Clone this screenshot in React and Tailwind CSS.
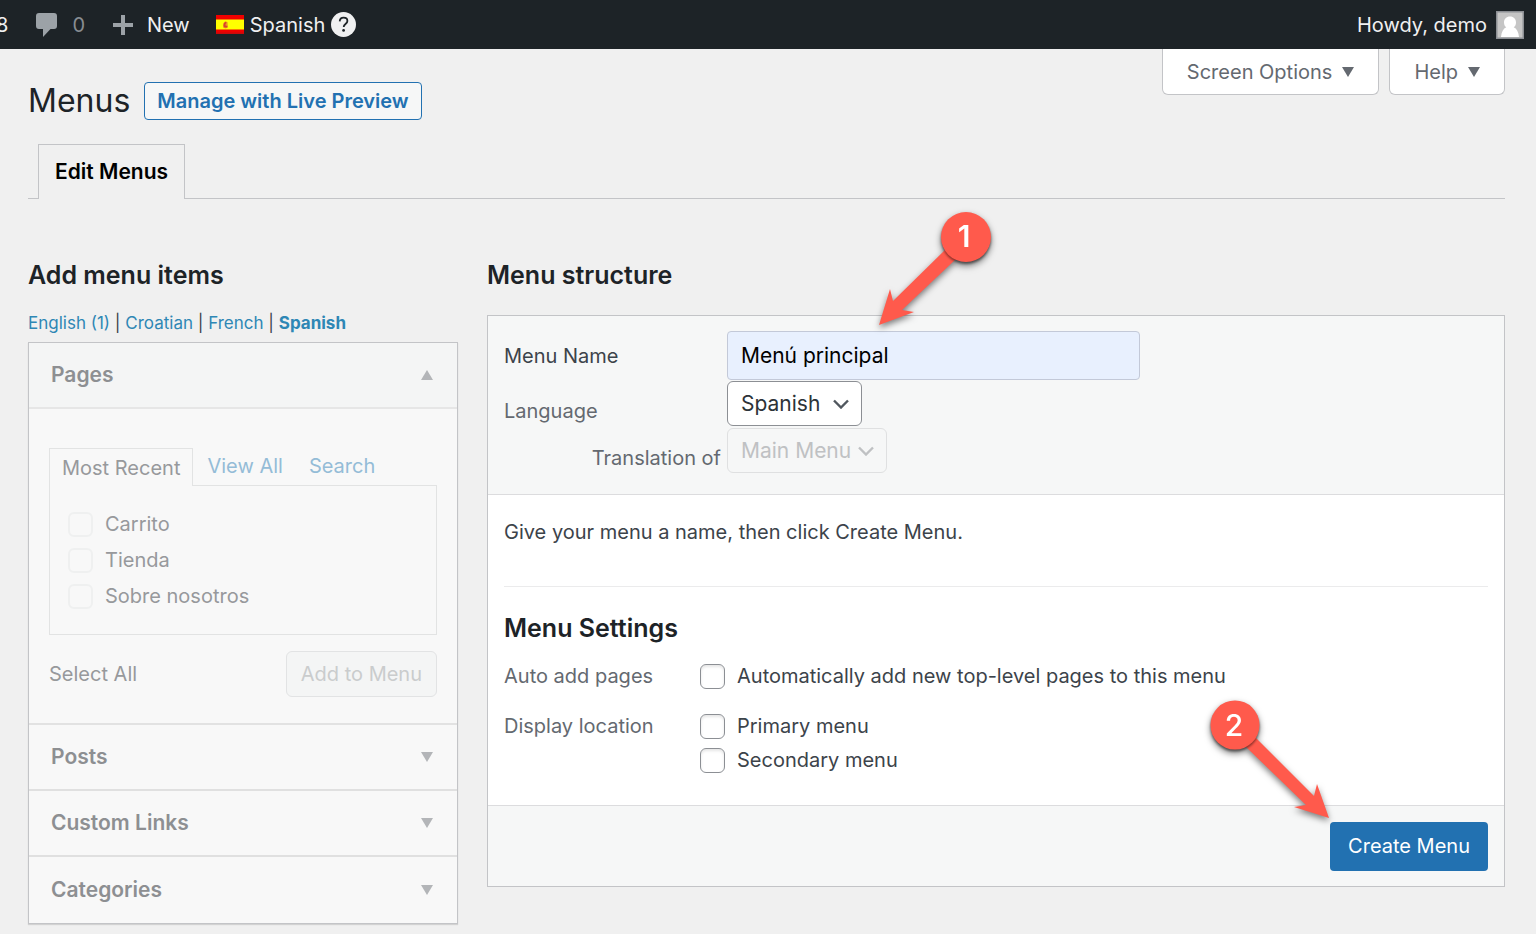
import React from 'react';

const recentPages = ['Carrito', 'Tienda', 'Sobre nosotros'];
const closedSections = ['Posts', 'Custom Links', 'Categories'];

const Triangle = ({ up = false, className = '' }) => (
  <svg viewBox="0 0 12 10" className={className} fill="currentColor" aria-hidden="true">
    <path d={up ? 'M6 0 12 10H0z' : 'M0 0h12L6 10z'} />
  </svg>
);

const SpainFlag = () => (
  <svg viewBox="0 0 28 19" className="w-7 h-[19px]" aria-hidden="true">
    <path fill="#f00000" d="M0 0h28v19H0z" />
    <path fill="#ffff00" d="M0 4.500h28v10H0z" />
    <path fill="#f09a20" d="M7 8.500l2-2 2.500.5.5 5.500-2.500 1-2.500-1z" />
    <path fill="#d8432a" d="M8 8l2-1.500.5 1.500-1 1v1.500l2 .5-.5 1.500H8.500L7.500 11z" />
    <path fill="#b31212" opacity=".6" d="M0 17.500h28V19H0z" />
  </svg>
);

const AdminBar = () => (
  <header className="h-[49px] bg-[#1d2327] text-[#f0f0f1] flex items-center justify-between pr-3 overflow-hidden">
    <nav className="flex items-center">
      <a href="#updates" className="-ml-1">8</a>
      <a href="#comments" className="ml-7 flex items-center gap-[14px] text-[#9ca2a7]">
        <svg viewBox="0 0 22 25" className="w-[22px] h-[25px]" fill="currentColor" aria-hidden="true">
          <path d="M3 1h15q3 0 3 3v10q0 3-3 3h-3.500L7 25V17H3q-3 0-3-3V4q0-3 3-3z" />
        </svg>
        <span className="text-[#888d92]">0</span>
      </a>
      <a href="#new" className="ml-7 flex items-center gap-[14px]">
        <svg viewBox="0 0 20 20" className="w-5 h-5 text-[#9ca2a7]" fill="currentColor" aria-hidden="true">
          <path d="M8 0h4v8h8v4h-8v8H8v-8H0V8h8z" />
        </svg>
        New
      </a>
      <a href="#language" className="ml-[26px] flex items-center gap-[6px]">
        <SpainFlag />
        Spanish
        <svg viewBox="0 0 25 25" className="w-[25px] h-[25px]" aria-hidden="true">
          <circle cx="12.500" cy="12.500" r="12.500" fill="#f0f0f1" />
          <path d="M8.700 9.300c.2-2.300 1.800-3.600 3.900-3.600 2.200 0 3.800 1.300 3.800 3.300 0 3-3.700 3-3.700 5.900" fill="none" stroke="#1d2327" strokeWidth="1.800" />
          <circle cx="12.600" cy="18.400" r="1.400" fill="#1d2327" />
        </svg>
      </a>
    </nav>
    <a href="#profile" className="flex items-center gap-[9px]">
      Howdy, demo
      <svg viewBox="0 0 28 28" className="w-7 h-7" aria-hidden="true">
        <path fill="#8c8f94" d="M0 0h28v28H0z" />
        <path fill="#c5c5c5" d="M1.500 1.500h25v25h-25z" />
        <path fill="#fff" d="M14 5.500c3.600 0 6 2.500 6 6 0 2.300-.9 3.800-2.300 4.800 3 1.300 4.800 4.700 5.300 9.700H5c.5-5 2.300-8.400 5.300-9.700C8.900 15.300 8 13.800 8 11.500c0-3.500 2.400-6 6-6z" />
      </svg>
    </a>
  </header>
);

const ScreenTab = ({ children }) => (
  <button className="h-[46px] px-6 flex items-center gap-[10px] bg-white border border-t-0 border-[#c3c4c7] rounded-b-md text-[#646970]">
    {children}
    <Triangle className="w-3 h-[10px]" />
  </button>
);

const Check = ({ id, label, muted = false }) => (
  <div className="flex items-center gap-3">
    <input
      id={id}
      type="checkbox"
      disabled={muted}
      className={`appearance-none size-[25px] rounded-md ${muted ? 'border-2 border-[#eff0f0] bg-[#f8f8f8]' : 'border border-[#8c8f94] bg-white shadow-[inset_0_2px_3px_rgba(0,0,0,0.1)]'}`}
    />
    <label htmlFor={id}>{label}</label>
  </div>
);

const Dropdown = ({ id, value, className, ...rest }) => (
  <div className={`relative h-[45px] ${className}`}>
    <select
      id={id}
      defaultValue={value}
      className="appearance-none size-full pl-[13px] rounded-md border border-[#8c8f94] bg-white text-[#2c3338] disabled:border-[#dfe0e1] disabled:bg-[#f6f7f7] disabled:text-[#bfc1c3] disabled:opacity-100"
      {...rest}
    >
      <option>{value}</option>
    </select>
    <svg viewBox="0 0 16 10" className={`absolute right-[13px] top-[18px] w-4 h-[10px] pointer-events-none ${rest.disabled ? 'text-[#bfc1c3]' : 'text-[#50575e]'}`} aria-hidden="true">
      <path d="M1 1.500l7 7 7-7" fill="none" stroke="currentColor" strokeWidth="2.400" />
    </svg>
  </div>
);

/* Numbered pins with an arrow; they float above the panels */
const PinOne = () => (
  <svg viewBox="0 0 130 130" className="absolute left-[383px] -top-[111px] w-[130px] h-[130px] overflow-visible pointer-events-none drop-shadow-[0_3px_3px_rgba(0,0,0,0.5)]" aria-hidden="true">
    <path fill="#ff5a4c" d="M8 120 19 84 22 96 75 44 85 54 31 105 43 107z" />
    <g className="drop-shadow-[0_2px_1px_rgba(0,0,0,0.45)]">
      <circle cx="95" cy="32" r="25" fill="#ff5a4c" />
    </g>
    <text x="93" y="42" textAnchor="middle" fontSize="30" fontWeight="600" fill="#fff">1</text>
  </svg>
);

const PinTwo = () => (
  <svg viewBox="0 0 130 130" className="absolute right-full bottom-full -mr-[5px] -mb-[3px] w-[130px] h-[130px] overflow-visible pointer-events-none drop-shadow-[0_3px_3px_rgba(0,0,0,0.5)]" aria-hidden="true">
    <path fill="#ff5a4c" d="M124 123 112 89 109 101 50 42 40 51 101 110 89 112z" />
    <g className="drop-shadow-[0_2px_1px_rgba(0,0,0,0.45)]">
      <circle cx="30" cy="30" r="24.500" fill="#ff5a4c" />
    </g>
    <text x="29" y="41" textAnchor="middle" fontSize="30" fontWeight="500" fill="#fff">2</text>
  </svg>
);

const AddItems = () => (
  <section className="w-[430px] shrink-0">
    <h2 className="text-[25px] leading-8 font-semibold text-[#1d2327]">Add menu items</h2>
    <div className="mt-5 text-[17px] leading-6 text-[#3c434a] whitespace-nowrap">
      <a href="#en" className="text-[#2e87b5]">English (1)</a> | <a href="#hr" className="text-[#2e87b5]">Croatian</a> |{' '}
      <a href="#fr" className="text-[#2e87b5]">French</a> | <a href="#es" className="text-[#2e87b5] font-bold">Spanish</a>
    </div>

    <div className="mt-[7px] border border-[#c3c4c7] shadow-[0_1px_1px_rgba(0,0,0,0.12)] bg-[#f8f8f8] text-[#97999c]">
      <button className="w-full h-[66px] pl-[22px] pr-6 flex items-center justify-between bg-[#f4f5f5] border-b-2 border-[#e6e6e6] text-[21px] font-semibold text-[#8d8f92]">
        Pages
        <Triangle up className="w-3 h-[10px] text-[#b3b5b8]" />
      </button>

      <div className="px-5 pt-[39px] pb-[26px] border-b-2 border-[#e2e2e2]">
        <div className="flex h-[38px] -mb-px relative">
          <button className="px-3 border border-b-0 border-[#e2e3e3] bg-[#f8f8f8]">Most Recent</button>
          <a href="#all" className="ml-[14px] leading-9 text-[#94bcd7]">View All</a>
          <a href="#search" className="ml-[26px] leading-9 text-[#94bcd7]">Search</a>
        </div>
        <div className="h-[150px] border border-[#e2e3e3] pl-[18px] pt-5 flex flex-col">
          {recentPages.map((page) => (
            <div key={page} className="h-9 flex items-center">
              <Check id={page} label={page} muted />
            </div>
          ))}
        </div>
        <div className="mt-4 flex items-center justify-between">
          <button>Select All</button>
          <button disabled className="h-[46px] px-[14px] rounded-md border border-[#e2e3e4] bg-[#f4f5f5] text-[#cacccd]">Add to Menu</button>
        </div>
      </div>

      {closedSections.map((name) => (
        <button key={name} className="w-full h-[66px] pl-[22px] pr-6 flex items-center justify-between border-b-2 last:border-b-0 border-[#e0e0e0] text-[21px] font-semibold text-[#8d8f92]">
          {name}
          <Triangle className="w-3 h-[10px] text-[#b3b5b8]" />
        </button>
      ))}
    </div>
  </section>
);

const MenuStructure = () => (
  <section className="flex-1 min-w-0">
    <h2 className="text-[25px] leading-8 font-semibold text-[#1d2327]">Menu structure</h2>
    <form className="relative mt-6 border border-[#c3c4c7] bg-white text-[#3c434a]" onSubmit={(e) => e.preventDefault()}>
      <PinOne />
      <div className="h-[179px] px-4 pt-[15px] bg-[#f6f7f7] border-b border-[#dcdcde] flex flex-col">
        <div className="flex items-center">
          <label htmlFor="menu-name" className="w-[223px]">Menu Name</label>
          <input
            id="menu-name"
            defaultValue="Menú principal"
            className="w-[413px] h-[49px] px-[13px] rounded border border-[#c3c9d8] bg-[#e8f0fe] text-[21px] text-black"
          />
        </div>
        <div className="mt-px flex items-center text-[#646970]">
          <label htmlFor="language" className="w-[223px] pt-[14px]">Language</label>
          <Dropdown id="language" value="Spanish" className="w-[135px] text-[21px]" />
        </div>
        <div className="mt-[2px] flex items-center text-[#646970]">
          <label htmlFor="translation" className="w-[223px] pr-[6px] pt-[14px] text-right">Translation of</label>
          <Dropdown id="translation" value="Main Menu" className="w-[160px] text-[21px]" disabled />
        </div>
      </div>

      <div className="px-4 pb-8">
        <p className="pt-[23px] leading-7">Give your menu a name, then click Create Menu.</p>
        <hr className="mt-10 border-t border-[#ebebec]" />
        <h3 className="mt-[25px] text-[25px] leading-8 font-semibold text-[#1d2327]">Menu Settings</h3>
        <fieldset className="mt-5 flex leading-[25px]">
          <legend className="float-left w-[196px] text-[#646970]">Auto add pages</legend>
          <Check id="auto-add" label="Automatically add new top-level pages to this menu" />
        </fieldset>
        <fieldset className="mt-[25px] flex leading-[25px]">
          <legend className="float-left w-[196px] text-[#646970]">Display location</legend>
          <div className="flex flex-col gap-[9px]">
            <Check id="primary" label="Primary menu" />
            <Check id="secondary" label="Secondary menu" />
          </div>
        </fieldset>
      </div>

      <div className="h-[81px] px-4 flex items-center justify-end bg-[#f6f7f7] border-t border-[#dcdcde]">
        <div className="relative">
          <button className="h-[49px] px-[18px] rounded bg-[#2271b1] text-white">Create Menu</button>
          <PinTwo />
        </div>
      </div>
    </form>
  </section>
);

export default function App() {
  return (
    <div className="min-h-screen bg-[#f0f0f0] font-['Inter',sans-serif] text-[20px] leading-7">
      <AdminBar />
      <main className="pl-7 pr-[31px] pb-2">
        <div className="h-[95px] flex justify-between items-start">
          <div className="pt-8 flex items-center gap-[14px]">
            <h1 className="text-[32px] leading-10 text-[#1d2327]">Menus</h1>
            <a href="#customize" className="h-[38px] px-3 flex items-center rounded border border-[#2271b1] bg-[#f6f7f7] font-semibold text-[#2271b1]">
              Manage with Live Preview
            </a>
          </div>
          <div className="flex gap-[10px]">
            <ScreenTab>Screen Options</ScreenTab>
            <ScreenTab>Help</ScreenTab>
          </div>
        </div>

        <nav className="border-b border-[#c3c4c7] px-[10px] h-[55px]">
          <a href="#edit" className="inline-flex items-center h-[55px] px-4 border border-b-0 border-[#c3c4c7] bg-[#f0f0f0] text-[21px] font-semibold text-black">
            Edit Menus
          </a>
        </nav>

        <div className="mt-[60px] flex gap-[29px]">
          <AddItems />
          <MenuStructure />
        </div>
      </main>
    </div>
  );
}
